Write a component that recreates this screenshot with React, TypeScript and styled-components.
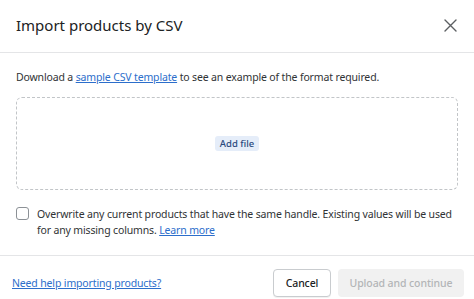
import React from "react";
import styled, { createGlobalStyle } from "styled-components";

const GlobalStyle = createGlobalStyle`
  html, body {
    margin: 0;
    padding: 0;
    background: #ffffff;
  }
  body {
    font-family: "Noto Sans", "Open Sans", sans-serif;
    color: #202223;
  }
`;

const Modal = styled.div`
  width: 474px;
  height: 299px;
  display: flex;
  flex-direction: column;
  background: #ffffff;
  overflow: hidden;
`;

const Header = styled.header`
  height: 53px;
  box-sizing: border-box;
  display: flex;
  align-items: center;
  justify-content: space-between;
  padding: 0 14px 2px 16px;
  border-bottom: 1px solid #e4e5e7;
`;

const Title = styled.h2`
  margin: 0;
  font-size: 15px;
  font-weight: 400;
  color: #202223;
`;

const CloseButton = styled.button`
  width: 20px;
  height: 20px;
  padding: 0;
  border: none;
  background: none;
  display: flex;
  align-items: center;
  justify-content: center;
  color: #5c5f62;
  cursor: pointer;
`;

const Body = styled.section`
  padding: 16px 16px 17px 16px;
  display: flex;
  flex-direction: column;
  border-bottom: 1px solid #e4e5e7;
`;

const Text = styled.p`
  margin: 0;
  font-size: 10.5px;
  letter-spacing: -0.15px;
  line-height: 16px;
  color: #303335;
`;

const Link = styled.a`
  color: #2c6ecb;
  text-decoration: underline;
  cursor: pointer;
`;

const DropZone = styled.div`
  margin-top: 12px;
  height: 91px;
  border: 1px dashed #c2c5c8;
  border-radius: 6px;
  display: flex;
  align-items: center;
  justify-content: center;
`;

const AddFile = styled.button`
  border: none;
  border-radius: 3px;
  background: #e5edf9;
  color: #2b4a7d;
  font-family: inherit;
  font-size: 9.5px;
  font-weight: 500;
  height: 15px;
  padding: 0 5px;
  line-height: 15px;
  cursor: pointer;
`;

const CheckRow = styled.label`
  margin-top: 16px;
  display: flex;
  align-items: flex-start;
  gap: 8px;
`;

const Box = styled.span`
  flex: none;
  width: 13px;
  height: 13px;
  margin-top: 1px;
  border: 1px solid #8c9196;
  border-radius: 3px;
  box-sizing: border-box;
`;

const Footer = styled.footer`
  flex: 1;
  display: flex;
  align-items: flex-start;
  justify-content: space-between;
  padding: 13px 10px 0 12px;
`;

const HelpLink = styled(Link)`
  font-size: 10.5px;
  letter-spacing: -0.15px;
  line-height: 28px;
`;

const Actions = styled.div`
  display: flex;
  gap: 7px;
`;

const Button = styled.button<{ $primary?: boolean }>`
  height: 28px;
  box-sizing: border-box;
  padding: 0;
  white-space: nowrap;
  border-radius: 4px;
  font-family: inherit;
  font-size: 10.5px;
  letter-spacing: -0.1px;
  font-weight: 500;
  border: ${(p) => (p.$primary ? "none" : "1px solid #c9cccf")};
  background: ${(p) => (p.$primary ? "#f1f1f1" : "#ffffff")};
  color: ${(p) => (p.$primary ? "#b3b5b7" : "#202223")};
  box-shadow: ${(p) => (p.$primary ? "none" : "0 1px 0 rgba(0,0,0,0.05)")};
  cursor: ${(p) => (p.$primary ? "default" : "pointer")};
`;

const CancelButton = styled(Button)`
  width: 58px;
`;

const UploadButton = styled(Button)`
  width: 126px;
`;

export default function App() {
  return (
    <>
      <GlobalStyle />
      <Modal>
        <Header>
          <Title>Import products by CSV</Title>
          <CloseButton aria-label="Close">
            <svg width="13" height="13" viewBox="0 0 13 13">
              <path d="M1 1 L12 12 M12 1 L1 12" stroke="currentColor" strokeWidth="1.4" strokeLinecap="round" />
            </svg>
          </CloseButton>
        </Header>
        <Body>
          <Text>
            Download a <Link>sample CSV template</Link> to see an example of the format required.
          </Text>
          <DropZone>
            <AddFile>Add file</AddFile>
          </DropZone>
          <CheckRow>
            <Box />
            <Text>
              Overwrite any current products that have the same handle. Existing values will be used
              <br />
              for any missing columns. <Link>Learn more</Link>
            </Text>
          </CheckRow>
        </Body>
        <Footer>
          <HelpLink>Need help importing products?</HelpLink>
          <Actions>
            <CancelButton>Cancel</CancelButton>
            <UploadButton $primary>Upload and continue</UploadButton>
          </Actions>
        </Footer>
      </Modal>
    </>
  );
}
